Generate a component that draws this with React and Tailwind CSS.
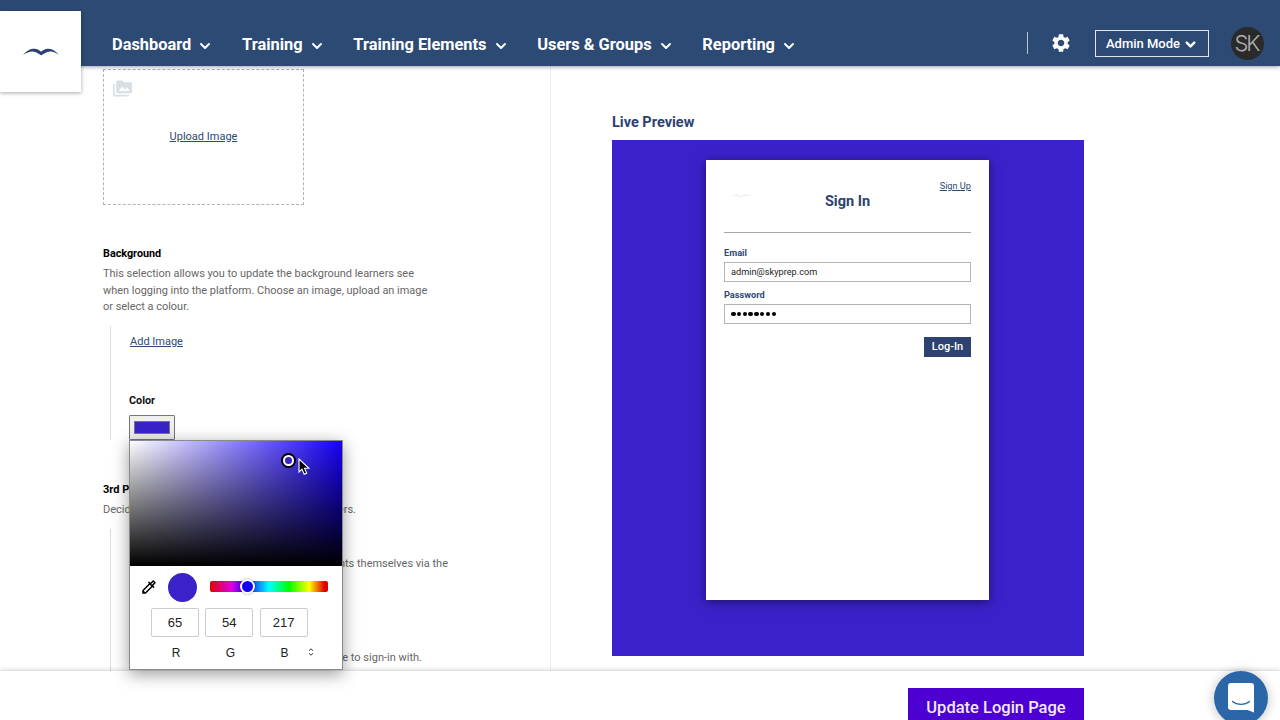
import React, { useState } from 'react';
import { ChevronDown } from 'lucide-react';
import { MdSettings, MdPermMedia, MdOutlineColorize } from 'react-icons/md';

const navItems = ['Dashboard', 'Training', 'Training Elements', 'Users & Groups', 'Reporting'];

const channels = [
  { label: 'R', value: 65 },
  { label: 'G', value: 54 },
  { label: 'B', value: 217 },
];

const Bird = ({ className }) => (
  <svg viewBox="0 0 36 9" preserveAspectRatio="none" className={className} fill="currentColor">
    <path d="M0 8C4 2.500 8 .6 11.500.8c3 .2 5 1.700 6.700 3.400C20 2.300 22 1 24.500.8c4-.2 8 2 11.500 7-3.500-3-7-4.600-10.200-3.700-3 .700-5 2.400-7.600 4.100-2.500-1.700-4.300-3.700-7.500-4.100C7.500 3.700 3.800 5 0 8z" />
  </svg>
);

const Header = () => (
  <header className="relative z-10 flex h-[66px] shrink-0 bg-[#2d4a75] shadow-[0_1px_4px_rgba(40,40,80,0.45)]">
    <div className="mt-[11px] flex h-[81px] w-[81px] items-center justify-center bg-white shadow-[0_1px_4px_rgba(0,0,0,0.35)]">
      <Bird className="h-[8px] w-[36px] text-[#2d4270]" />
    </div>

    <nav className="ml-[31px] flex h-[43px] items-center gap-[28.7px] self-end">
      {navItems.map((item) => (
        <a key={item} href="#" className="flex items-center gap-[6px] whitespace-nowrap text-[16.4px] font-bold text-white">
          <span className="pt-[2px]">{item}</span>
          <ChevronDown size={16} strokeWidth={3} className="mt-[4px]" />
        </a>
      ))}
    </nav>

    <div className="mr-[16px] ml-auto flex h-[46px] items-center self-end">
      <div className="h-[22px] w-px bg-[#b9c4d6]" />
      <MdSettings size={22} className="ml-[22px] text-white" />
      <button className="ml-[23px] flex h-[27px] w-[114px] items-center justify-center gap-[3px] border border-[#dfe6f0] text-[13px] font-medium whitespace-nowrap text-white">
        <span className="pt-[2px]">Admin Mode</span>
        <ChevronDown size={15} strokeWidth={4} className="mt-[2px]" />
      </button>
      <div className="ml-[22px] flex h-[33px] w-[33px] items-center justify-center rounded-full bg-[#2a2a2b] pr-[2px] font-['Inter',sans-serif] text-[22px] font-light tracking-[-2px] text-[#b0b0b0]">
        SK
      </div>
    </div>
  </header>
);

const Settings = () => (
  <section className="w-[551px] shrink-0 border-r border-[#ececec] pt-[3px] pl-[103px] text-[11px] text-[#666]">
    <div className="relative flex h-[136px] w-[201px] items-center justify-center border border-dashed border-[#b3b3b3]">
      <MdPermMedia size={19} className="absolute top-[9px] left-[9px] text-[#d9e0e5]" />
      <a href="#" className="text-[#2d4a75] underline">Upload Image</a>
    </div>

    <h3 className="mt-[40px] text-[10.8px] leading-[17px] font-bold text-black">Background</h3>
    <p className="mt-[4px] text-[10.95px] leading-[16.5px] whitespace-nowrap">
      This selection allows you to update the background learners see
      <br />
      when logging into the platform. Choose an image, upload an image
      <br />
      or select a colour.
    </p>

    <div className="mt-[10px] ml-[7px] h-[114px] border-l border-[#dcdcdc] pt-[7px] pl-[19px]">
      <a href="#" className="block leading-[17px] text-[#2d4a75] underline">Add Image</a>
      <h4 className="mt-[42px] -ml-px text-[10.8px] leading-[17px] font-bold text-[#111]">Color</h4>
      <div className="mt-[6px] -ml-px h-[25px] w-[46px] rounded-[1px] border border-[#767676] bg-[#efefef] px-[4px] py-[5px]">
        <div className="h-full border border-[#777] bg-[#3a22cb]" />
      </div>
    </div>

    {/* rows below are partly covered by the colour popup */}
    <h3 className="mt-[41px] leading-[17px] font-bold text-black">3rd P</h3>
    <div className="mt-[3px] flex w-[253px] justify-between leading-[17px]">
      <span>Decid</span>
      <span>ers.</span>
    </div>
    <div className="mt-[11px] ml-[7px] flex h-[160px] w-[338px] flex-col items-end border-l border-[#dcdcdc] pt-[26px]">
      <span className="leading-[17px]">nts themselves via the</span>
      <span className="mt-[77px] mr-[26px] leading-[17px]">e to sign-in with.</span>
    </div>
  </section>
);

const Field = ({ label, type, value }) => (
  <label className="block">
    <span className="block text-[9.2px] leading-[14px] font-bold text-[#2d4a75]">{label}</span>
    <div className="mt-[2px] flex h-[20px] items-center border border-[#b5b5b5] px-[6px] text-[9.2px] text-[#222]">
      {type === 'password' ? (
        <span className="flex gap-[1.3px]">
          {[...value].map((_, i) => (
            <i key={i} className="h-[4.5px] w-[4.5px] rounded-full bg-black" />
          ))}
        </span>
      ) : (
        value
      )}
    </div>
  </label>
);

const LivePreview = () => (
  <section className="flex-1 pt-[47px] pl-[61px]">
    <h2 className="text-[14.5px] leading-[20px] font-bold text-[#2d4270]">Live Preview</h2>
    <div className="mt-[7px] flex h-[516px] w-[472px] justify-center bg-[#3a22cb] pt-[20px] pr-px">
      <div className="h-[440px] w-[283px] bg-white px-[18px] pt-[19px] shadow-[0_2px_10px_rgba(0,0,0,0.5)]">
        <div className="flex h-[54px] flex-col border-b border-[#a8a8a8]">
          <a href="#" className="self-end text-[9.2px] leading-[14px] text-[#2d4a75] underline">Sign Up</a>
          <div className="grid grid-cols-3 items-start">
            <Bird className="mt-px ml-[5px] h-[4px] w-[24px] text-[#eef0f3]" />
            <h1 className="text-center text-[14.5px] leading-[18px] font-bold whitespace-nowrap text-[#2d4270]">Sign In</h1>
          </div>
        </div>
        <div className="mt-[13px] flex flex-col gap-[6px]">
          <Field label="Email" type="email" value="admin@skyprep.com" />
          <Field label="Password" type="password" value="12345678" />
        </div>
        <button className="mt-[13px] ml-auto block h-[20px] w-[47px] bg-[#2d4270] text-[11px] leading-[20px] font-medium text-white">
          Log-In
        </button>
      </div>
    </div>
  </section>
);

const ColorPopup = ({ channels }) => (
  <div className="absolute top-[440px] left-[129px] z-20 h-[230px] w-[214px] border border-[#8a8a8a] bg-white font-['Liberation_Sans',Arial,sans-serif] shadow-[0_4px_16px_rgba(0,0,0,0.4)]">
    <div className="relative h-[125px] bg-[#1600f5] bg-[linear-gradient(to_top,#000,transparent),linear-gradient(to_right,#fff,transparent)]">
      <div className="absolute top-[11.5px] left-[150.5px] h-[15px] w-[15px] rounded-full border-2 border-black bg-[#3a22cb]">
        <div className="h-full w-full rounded-full border-2 border-white" />
      </div>
      <svg viewBox="0 0 12 18" className="absolute top-[16.5px] left-[168px] h-[18px] w-[12px]">
        <path d="M1 1v13l3-2.800 2.200 5 2.500-1.100-2.200-4.900h4.300z" fill="#000" stroke="#fff" strokeWidth="1.100" />
      </svg>
    </div>

    <div className="flex h-[42px] items-center pl-[10px]">
      <MdOutlineColorize size={18} className="text-black" />
      <div className="ml-[10px] h-[29px] w-[29px] rounded-full bg-[#3a22cb]" />
      <div className="relative mb-px ml-[13px] h-[11px] w-[118px] rounded-[2px] bg-[linear-gradient(to_right,#e00000,#e000e0_18%,#1600f5_31%,#00ffff_50%,#00ff00_67%,#ffff00_84%,#e00000_97%)]">
        <div className="absolute -top-[2px] left-[30px] h-[15px] w-[15px] rounded-full border-2 border-white bg-[#1600f0] shadow-[0_0_2px_rgba(0,0,0,0.5)]" />
      </div>
    </div>

    <div className="flex gap-[6.3px] pl-[21px] text-[#222]">
      {channels.map(({ label, value }) => (
        <div key={label} className="w-[48px]">
          <div className="flex h-[29px] items-center justify-center rounded-[2px] border border-[#ccc] text-[13px]">{value}</div>
          <div className="mt-[8px] pl-[2px] text-center text-[12px] leading-[16px]">{label}</div>
        </div>
      ))}
      <svg viewBox="0 0 6 8" className="mt-[40px] -ml-[6px] h-[8px] w-[6px]" fill="none" stroke="#333" strokeWidth="1">
        <path d="M1 2.700l2-1.900 2 1.900M1 5.300l2 1.900 2-1.900" />
      </svg>
    </div>
  </div>
);

const Footer = () => (
  <footer className="relative z-10 h-[49px] shrink-0 bg-white pl-[908px] shadow-[0_-1px_4px_rgba(0,0,0,0.18)]">
    <button className="mt-[17px] h-[40px] w-[176px] bg-[#4c00d2] text-[16.5px] font-medium whitespace-nowrap text-[#f3e8ff]">
      Update Login Page
    </button>
    <div className="absolute top-0 left-[1214px] flex h-[54px] w-[54px] items-center justify-center rounded-full bg-[#2b66a8] shadow-[0_1px_12px_rgba(0,0,0,0.25)]">
      <svg viewBox="0 0 26 30" className="h-[30px] w-[26px]">
        <path d="M3 0h20a3 3 0 0 1 3 3v26.500L19.500 27H3a3 3 0 0 1-3-3V3a3 3 0 0 1 3-3z" fill="#fff" />
        <path d="M4.500 18.500c4.500 3.800 12.500 3.800 17 0" fill="none" stroke="#2b66a8" strokeWidth="1.300" strokeLinecap="round" />
      </svg>
    </div>
  </footer>
);

const App = () => {
  const [pickerOpen] = useState(true);

  return (
    <div className="relative flex h-screen flex-col overflow-hidden bg-white font-['Roboto',sans-serif]">
      <Header />
      <main className="flex min-h-0 flex-1 overflow-hidden">
        <Settings />
        <LivePreview />
      </main>
      <Footer />
      {pickerOpen && <ColorPopup channels={channels} />}
    </div>
  );
};

export default App;
